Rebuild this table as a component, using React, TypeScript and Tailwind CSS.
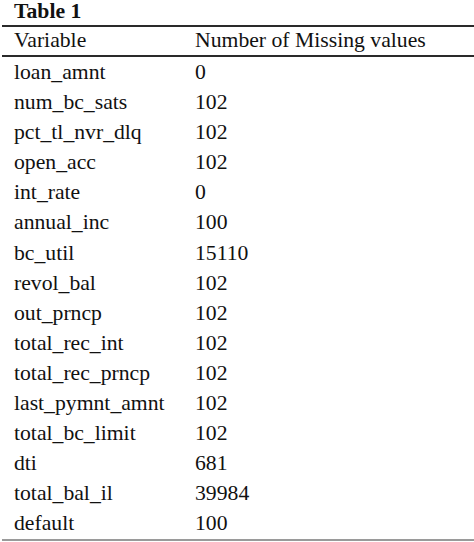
const rows: [string, string][] = [
  ['loan_amnt', '0'],
  ['num_bc_sats', '102'],
  ['pct_tl_nvr_dlq', '102'],
  ['open_acc', '102'],
  ['int_rate', '0'],
  ['annual_inc', '100'],
  ['bc_util', '15110'],
  ['revol_bal', '102'],
  ['out_prncp', '102'],
  ['total_rec_int', '102'],
  ['total_rec_prncp', '102'],
  ['last_pymnt_amnt', '102'],
  ['total_bc_limit', '102'],
  ['dti', '681'],
  ['total_bal_il', '39984'],
  ['default', '100'],
]

export default function App() {
  return (
    <div className="w-[474px] h-[542px] overflow-hidden bg-white text-[#111] text-[21.7px] font-['Liberation_Serif','Times_New_Roman',serif]">
      <h1 className="pl-[14px] pt-[1px] h-[25px] leading-[20px] font-bold">Table 1</h1>
      <div className="ml-[2px]">
        <div className="flex h-[32px] border-t-2 border-b-2 border-[#2a2a2a] leading-[26px]">
          <div className="w-[193px] pl-[12px]">Variable</div>
          <div>Number of Missing values</div>
        </div>
        <div className="border-b-2 border-[#9a9a9a]">
          {rows.map(([name, value]) => (
            <div key={name} className="flex h-[30.1px] leading-[30px]">
              <div className="w-[193px] pl-[12px]">{name}</div>
              <div>{value}</div>
            </div>
          ))}
        </div>
      </div>
    </div>
  )
}
